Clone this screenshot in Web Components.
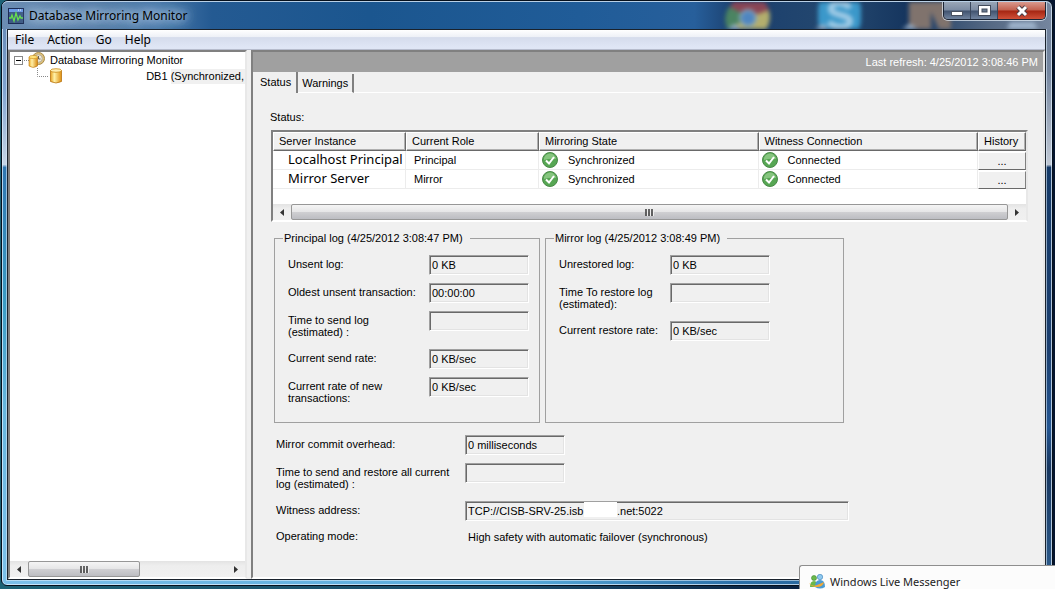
<!DOCTYPE html>
<html lang="en">
<head>
<meta charset="utf-8">
<title>Database Mirroring Monitor</title>
<style>
    * { box-sizing: border-box; }
    body {
        margin: 0;
        min-height: 100vh;
        display: flex;
        flex-direction: column;
        padding: 0 2px 3px 1px;
        background: linear-gradient(90deg, #1d6276, #1b4a68 50%, #061a3a 80%, #04142e);
        font: 11px/12px "Liberation Sans", Arial, sans-serif;
        color: #000;
        overflow: hidden;
    }
    monitor-window { flex: 1; }
    .workspace {
        flex: 1;
        display: grid;
        grid-template-columns: 239px 1fr;
        gap: 4px;
        background: #f0f0f0;
    }
    .panel {
        display: flex;
        flex-direction: column;
        min-width: 0;
        border: 2px solid;
        border-color: #808080 #e8e8e8 #fff #808080;
    }
    .content {
        display: flex;
        flex-direction: column;
        padding: 18px 15px 12px 17px;
    }
    .caption { margin-bottom: 7px; }
    status-grid { margin-left: 1px; }
    .groups {
        display: flex;
        gap: 5px;
        margin: 10px 0 12px 4px;
    }
    .summary {
        display: flex;
        flex-direction: column;
        gap: 8px;
        margin-left: 6px;
        --label-width: 189px;
    }
</style>
</head>
<body>
    <monitor-window heading="Database Mirroring Monitor">
        <menu-bar items="File,Action,Go,Help"></menu-bar>
        <div class="workspace">
            <server-tree></server-tree>
            <div class="panel">
                <refresh-bar>Last refresh: 4/25/2012 3:08:46 PM</refresh-bar>
                <tab-strip tabs="Status,Warnings"></tab-strip>
                <div class="content">
                    <div class="caption">Status:</div>
                    <status-grid></status-grid>
                    <div class="groups">
                        <log-group heading="Principal log (4/25/2012 3:08:47 PM)" style="--group-width: 266px; --label-width: 141px">
                            <value-field label="Unsent log:" value="0 KB"></value-field>
                            <value-field label="Oldest unsent transaction:" value="00:00:00"></value-field>
                            <value-field label="Time to send log&#10;(estimated) :"></value-field>
                            <value-field label="Current send rate:" value="0 KB/sec"></value-field>
                            <value-field label="Current rate of new&#10;transactions:" value="0 KB/sec"></value-field>
                        </log-group>
                        <log-group heading="Mirror log (4/25/2012 3:08:49 PM)" style="--group-width: 299px; --label-width: 111px">
                            <value-field label="Unrestored log:" value="0 KB"></value-field>
                            <value-field label="Time To restore log&#10;(estimated):"></value-field>
                            <value-field label="Current restore rate:" value="0 KB/sec"></value-field>
                        </log-group>
                    </div>
                    <div class="summary">
                        <value-field label="Mirror commit overhead:" value="0 milliseconds"></value-field>
                        <value-field label="Time to send and restore all current&#10;log (estimated) :"></value-field>
                        <value-field wide masked label="Witness address:" value="TCP://CISB-SRV-25.isb           .net:5022"></value-field>
                        <value-field plain label="Operating mode:" value="High safety with automatic failover (synchronous)"></value-field>
                    </div>
                </div>
            </div>
        </div>
    </monitor-window>
    <toast-popup>Windows Live Messenger</toast-popup>

<script>
const monitor_window_template = document.createElement('template');
monitor_window_template.innerHTML = `
    <style>
        * { box-sizing: border-box; }
        :host {
            display: flex;
            flex-direction: column;
            padding: 0 6px 5px 5px;
            border: 1px solid #06101c;
            border-radius: 7px 7px 6px 6px;
            box-shadow: inset 0 0 0 1px rgba(225, 240, 255, .75);
            background:
                linear-gradient(#5f84b0, #7fa3cf 15%, #c5d5e6 28%, #2f76b0 28.5%, #3a9cc4 52%, #66b6de 70%, #7cc0ea) left / 7px 100% no-repeat,
                linear-gradient(#6d7f99, #75869f 12%, #c0c8d4 28%, #153a68 28.5%, #1c4070 60%, #245692 73%, #17365f 80%, #2f5f90) right / 8px 100% no-repeat,
                linear-gradient(90deg, #7cc0ea, #55a8d8 50%, #2c70a8 70%, #1c4a7c) bottom / 100% 7px no-repeat,
                #24588f;
        }
        .title {
            position: relative;
            display: flex;
            justify-content: space-between;
            height: 28px;
            margin: 0 -5px;
            padding: 0 5px 0 6px;
            border-radius: 6px 6px 0 0;
            border-top: 1px solid #b9d0e6;
            overflow: hidden;
            background: linear-gradient(90deg, #6b8db3, #547ca8 10%, #4a78aa 15%, #245a92 20%, #1b568f 35%, #205c98 55%, #275f9b 66%, #1b3f6d 70%, #24486f 80%, #16365f 86%, #546883 94%, #75869f);
        }
        .backdrop {
            position: absolute;
            right: 0;
            top: 0;
            width: 352px;
            height: 27px;
            filter: blur(2px);
        }
        .name {
            position: relative;
            display: flex;
            align-items: center;
            gap: 5px;
        }
        h1 {
            margin: 0;
            font: 12px/16px "Noto Sans", "Open Sans", sans-serif;
            text-shadow: 0 0 8px #c8dcf0, 0 0 12px #b5cde6, 0 0 14px #b5cde6;
        }
        .controls {
            position: relative;
            display: flex;
            height: 18px;
            border: 1px solid #1b2535;
            border-top: 0;
            border-radius: 0 0 5px 5px;
            box-shadow: 0 0 0 1px rgba(230, 240, 250, .7);
            overflow: hidden;
        }
        button {
            display: flex;
            align-items: center;
            justify-content: center;
            width: 27px;
            padding: 0;
            border: 0;
            border-right: 1px solid #39475c;
            background: linear-gradient(#99a6b7, #7b8ba2 48%, #40526e 52%, #71849f);
        }
        .close {
            width: 47px;
            border-right: 0;
            background: linear-gradient(#d99a8e, #c2604e 48%, #a52512 52%, #d05038);
        }
        .client {
            flex: 1;
            display: flex;
            flex-direction: column;
            border: 1px solid #1a222c;
            box-shadow: 0 0 0 1px rgba(220, 236, 250, .6);
        }
    </style>
    <div class="title">
        <svg class="backdrop" viewBox="0 0 352 27" aria-hidden="true">
            <circle cx="50" cy="15" r="21" fill="#b3ae6d"/>
            <path d="M50 15L29 28A21 21 0 0 1 31 4z" fill="#4b8462"/>
            <path d="M50 15L31 5A21 21 0 0 1 70 8z" fill="#8a4555"/>
            <circle cx="49" cy="16" r="8" fill="#4f86c0" stroke="#8faab8" stroke-width="2"/>
            <rect x="119" y="-8" width="43" height="42" rx="15" fill="#3b98ca"/>
            <path d="M151 6C145-1 132 0 132 7S151 12 151 19 136 27 130 20" fill="none" stroke="#a0cbe6" stroke-width="6"/>
            <path d="M210 0h42v27h-12l-8-17v17h-22z" fill="#80736d"/>
            <path d="M203 27l8-5 8 5zM28 27l8-5 6 5zM116 27l8-5 6 5zM308 27l3-7h24l4 7z" fill="#9fb4cc"/>
        </svg>
        <div class="name">
            <svg width="16" height="16" viewBox="0 0 16 16" aria-hidden="true">
                <rect x=".5" y=".5" width="15" height="15" fill="#3d5a85" stroke="#1c2c55"/>
                <rect x="1" y="1" width="14" height="3" fill="#6d9be6"/>
                <path d="M10 2h1M12 2h1" stroke="#fff"/>
                <path d="M1 10h2l1-3 2 6 2-8 2 7 2-4 1 2h2" fill="none" stroke="#66e04e" stroke-width="1.3"/>
            </svg>
            <h1></h1>
        </div>
        <div class="controls">
            <button aria-label="Minimize"><svg width="12" height="12"><rect x=".5" y="6.500" width="11" height="4" fill="#fff" stroke="#4a5261"/></svg></button>
            <button aria-label="Maximize"><svg width="13" height="12"><rect x="2.500" y="2.500" width="8" height="6" fill="none" stroke="#434c5c" stroke-width="5"/><rect x="2.500" y="2.500" width="8" height="6" fill="#67788f" stroke="#fff" stroke-width="3"/><rect x="4" y="4" width="5" height="3" fill="none" stroke="#434c5c"/></svg></button>
            <button class="close" aria-label="Close"><svg width="14" height="12"><path d="M3 2l8 8M11 2l-8 8" stroke="#4b3e46" stroke-width="5"/><path d="M3 2l8 8M11 2l-8 8" stroke="#fff" stroke-width="3"/></svg></button>
        </div>
    </div>
    <div class="client"><slot></slot></div>
`

class MonitorWindow extends HTMLElement {
    constructor() {
        super();
        this.attachShadow({mode: 'open'});
        this.shadowRoot.appendChild(monitor_window_template.content.cloneNode(true));
    }
    connectedCallback() {
        this.shadowRoot.querySelector('h1').textContent = this.getAttribute('heading');
    }
}
window.customElements.define('monitor-window', MonitorWindow)

class MenuBar extends HTMLElement {
    constructor() {
        super();
        this.attachShadow({mode: 'open'});
    }
    connectedCallback() {
        let items = this.getAttribute('items').split(',');
        this.shadowRoot.innerHTML = `
            <style>
                :host {
                    display: flex;
                    gap: 13px;
                    height: 20px;
                    padding: 0 7px;
                    background: linear-gradient(#fff, #eef1f7 35%, #d5dcec 40%, #dfe6f5 90%);
                    border-bottom: 1px solid #b6bccc;
                    box-sizing: border-box;
                }
                button {
                    padding: 0;
                    border: 0;
                    background: none;
                    font: 12px/18px "Noto Sans", "Open Sans", sans-serif;
                }
            </style>
            ${items.map((item) => `<button>${item}</button>`).join('')}`;
    }
}
window.customElements.define('menu-bar', MenuBar)

const scroll_track_template = document.createElement('template');
scroll_track_template.innerHTML = `
    <style>
        :host {
            display: flex;
            height: 16px;
            background: linear-gradient(#e3e3e3, #eee 30%, #f0f0f0);
        }
        button {
            display: flex;
            align-items: center;
            justify-content: center;
            width: 18px;
            padding: 0;
            border: 0;
            background: none;
        }
        .track { flex: 1; display: flex; }
        .thumb {
            box-sizing: border-box;
            width: var(--thumb-width, 100%);
            border: 1px solid #979797;
            border-radius: 2px;
            display: flex;
            align-items: center;
            justify-content: center;
            background: linear-gradient(#f5f5f5, #e6e6e7 48%, #cfcfd2 52%, #bcbdc2);
        }
    </style>
    <button aria-label="Scroll left"><svg width="4" height="7"><path d="M4 0v7L0 3.500z" fill="#333"/></svg></button>
    <div class="track"><div class="thumb"><svg width="9" height="7"><path d="M1 0v7M4 0v7M7 0v7" stroke="#444" stroke-width="1.600"/><path d="M2.500 0v7M5.500 0v7M8.500 0v7" stroke="#eee"/></svg></div></div>
    <button aria-label="Scroll right"><svg width="4" height="7"><path d="M0 0v7l4-3.500z" fill="#333"/></svg></button>
`

class ScrollTrack extends HTMLElement {
    constructor() {
        super();
        this.attachShadow({mode: 'open'});
        this.shadowRoot.appendChild(scroll_track_template.content.cloneNode(true));
    }
}
window.customElements.define('scroll-track', ScrollTrack)

const server_tree_template = document.createElement('template');
server_tree_template.innerHTML = `
    <style>
        :host {
            display: flex;
            flex-direction: column;
            min-width: 0;
            box-sizing: border-box;
            border: 2px solid;
            border-color: #808080 #e8e8e8 #fff #808080;
            background: #fff;
        }
        ul {
            flex: 1;
            margin: 0;
            padding: 0;
            list-style: none;
            overflow: hidden;
        }
        li {
            display: flex;
            align-items: center;
            height: 16px;
            white-space: nowrap;
        }
        .root { padding-left: 4px; gap: 5px; }
        .child { padding-left: 27px; }
        .child .name {
            flex: 1;
            padding-right: 1px;
            text-align: right;
            line-height: 15px;
            background: linear-gradient(90deg, #fff 108px, #f0f0f0 108px);
        }
        svg { flex: none; }
    </style>
    <ul role="tree">
        <li class="root" role="treeitem">
            <svg width="31" height="16" viewBox="0 0 31 16">
                <defs><linearGradient id="gold"><stop offset="0" stop-color="#f0b030"/><stop offset=".35" stop-color="#fff0a8"/><stop offset="1" stop-color="#d98a10"/></linearGradient></defs>
                <rect x=".5" y="4.500" width="8" height="8" fill="#fff" stroke="#888"/>
                <path d="M2 8.500h5" stroke="#000"/>
                <path d="M10 8.500h5" stroke="#888" stroke-dasharray="1 1"/>
                <circle cx="24.500" cy="6.500" r="6" fill="#dcc07c" stroke="#a88a48"/>
                <circle cx="24.500" cy="6.500" r="3.800" fill="#eee8d8" stroke="#b9b09a"/>
                <path d="M24.500 7V4M24.500 7h2" stroke="#6b6250"/>
                <path d="M15 5v9q4 3 8.500 0V5z" fill="url(#gold)" stroke="#b87310" stroke-width=".6"/>
                <ellipse cx="19.250" cy="5" rx="4.250" ry="1.600" fill="#ffe27a" stroke="#c98a18" stroke-width=".6"/>
            </svg>
            <span>Database Mirroring Monitor</span>
        </li>
        <li class="child" role="treeitem">
            <svg width="26" height="16" viewBox="0 0 26 16">
                <path d="M.5 0v8.500H12" fill="none" stroke="#888" stroke-dasharray="1 1"/>
                <path d="M13.500 2.500v11q5.500 3 11 0v-11z" fill="url(#gold2)" stroke="#b87310" stroke-width=".8"/>
                <defs><linearGradient id="gold2"><stop offset="0" stop-color="#e8a020"/><stop offset=".35" stop-color="#fff2a8"/><stop offset="1" stop-color="#e09010"/></linearGradient></defs>
                <ellipse cx="19" cy="2.500" rx="5.500" ry="1.800" fill="#ffeeb0" stroke="#c98a18" stroke-width=".8"/>
            </svg>
            <span class="name">DB1 (Synchronized,</span>
        </li>
    </ul>
    <scroll-track style="--thumb-width: 112px"></scroll-track>
`

class ServerTree extends HTMLElement {
    constructor() {
        super();
        this.attachShadow({mode: 'open'});
        this.shadowRoot.appendChild(server_tree_template.content.cloneNode(true));
    }
}
window.customElements.define('server-tree', ServerTree)

class RefreshBar extends HTMLElement {
    constructor() {
        super();
        this.attachShadow({mode: 'open'});
        this.shadowRoot.innerHTML = `
            <style>
                :host {
                    display: block;
                    padding-right: 5px;
                    text-align: right;
                    line-height: 20px;
                    color: #fff;
                    background: #a0a0a0;
                }
            </style>
            <slot></slot>`;
    }
}
window.customElements.define('refresh-bar', RefreshBar)

class TabStrip extends HTMLElement {
    constructor() {
        super();
        this.attachShadow({mode: 'open'});
    }
    connectedCallback() {
        let tabs = this.getAttribute('tabs').split(',');
        this.shadowRoot.innerHTML = `
            <style>
                :host {
                    display: flex;
                    align-items: flex-end;
                    height: 21px;
                }
                button {
                    box-sizing: border-box;
                    height: 19px;
                    padding: 0 4px;
                    border: 0;
                    border-right: 2px solid #808080;
                    border-bottom: 1px solid #fff;
                    background: none;
                    font: inherit;
                }
                button[aria-selected="true"] {
                    height: 21px;
                    padding: 0 5px 2px 7px;
                    border-bottom: 0;
                }
                .rule { flex: 1; border-bottom: 1px solid #fff; }
            </style>
            ${tabs.map((tab, i) => `<button role="tab" aria-selected="${i === 0}">${tab}</button>`).join('')}
            <div class="rule"></div>`;
    }
}
window.customElements.define('tab-strip', TabStrip)

class StatusGrid extends HTMLElement {
    constructor() {
        super();
        this.attachShadow({mode: 'open'});
        this.servers = [
            {name: 'Localhost Principal', role: 'Principal', state: 'Synchronized', witness: 'Connected'},
            {name: 'Mirror Server', role: 'Mirror', state: 'Synchronized', witness: 'Connected'}
        ];
    }
    renderCheck(text) {
        return `
            <div class="check">
                <svg width="16" height="16" viewBox="0 0 16 16">
                    <circle cx="8" cy="8" r="7.500" fill="#56a653" stroke="#4a8a48"/>
                    <path d="M2 8a6 6 0 0 1 12-1Q8 6 2 8z" fill="#86c57f"/>
                    <path d="M4 8.500l3 3 5-6.500" fill="none" stroke="#fff" stroke-width="2"/>
                </svg>
                <span>${text}</span>
            </div>`;
    }
    connectedCallback() {
        let rows = this.servers.map(({name, role, state, witness}) => `
            <tr>
                <td class="server">${name}</td>
                <td class="role">${role}</td>
                <td>${this.renderCheck(state)}</td>
                <td>${this.renderCheck(witness)}</td>
                <td class="history"><button aria-label="History of ${name}">...</button></td>
            </tr>`).join('');
        this.shadowRoot.innerHTML = `
            <style>
                * { box-sizing: border-box; }
                :host {
                    display: block;
                    border: 2px solid;
                    border-color: #808080 #e8e8e8 #fff #808080;
                    background: #fff;
                }
                table {
                    width: 100%;
                    table-layout: fixed;
                    border-collapse: separate;
                    border-spacing: 0;
                    margin-bottom: 15px;
                }
                .narrow { width: 133px; }
                .last { width: 48px; }
                th {
                    height: 19px;
                    padding: 0 0 2px 5px;
                    text-align: left;
                    font-weight: normal;
                    background: #f0f0f0;
                    border: 1px solid;
                    border-color: #fff #696969 #696969 #fff;
                    box-shadow: inset -1px -1px #b0b0b0;
                }
                td {
                    height: 19px;
                    padding: 0;
                    border-right: 1px solid #ececec;
                    border-bottom: 1px solid #ececec;
                    white-space: nowrap;
                }
                .server {
                    padding: 0 0 2px 15px;
                    font: 13px/15px "Noto Sans", "Open Sans", sans-serif;
                }
                .role { padding-left: 8px; }
                .check {
                    display: flex;
                    align-items: center;
                    gap: 10px;
                    padding-left: 3px;
                }
                .history { border: 0; }
                button {
                    display: block;
                    width: 100%;
                    height: 18px;
                    padding: 0;
                    border: 1px solid;
                    border-color: #fff #808080 #696969 #fff;
                    background: #f0f0f0;
                    font: inherit;
                }
            </style>
            <table>
                <thead>
                    <tr>
                        <th class="narrow">Server Instance</th>
                        <th class="narrow">Current Role</th>
                        <th>Mirroring State</th>
                        <th>Witness Connection</th>
                        <th class="last">History</th>
                    </tr>
                </thead>
                <tbody>${rows}</tbody>
            </table>
            <scroll-track></scroll-track>`;
    }
}
window.customElements.define('status-grid', StatusGrid)

class LogGroup extends HTMLElement {
    constructor() {
        super();
        this.attachShadow({mode: 'open'});
    }
    connectedCallback() {
        this.shadowRoot.innerHTML = `
            <style>
                :host { display: flex; width: var(--group-width); }
                fieldset {
                    flex: 1;
                    min-width: 0;
                    margin: 0;
                    padding: 11px 0 15px 13px;
                    border: 1px solid #a0a0a0;
                }
                legend {
                    margin-left: -5px;
                    padding: 0 7px 0 1px;
                    background: #f0f0f0;
                }
                .fields {
                    display: flex;
                    flex-direction: column;
                    gap: 8px;
                }
            </style>
            <fieldset>
                <legend>${this.getAttribute('heading')}</legend>
                <div class="fields"><slot></slot></div>
            </fieldset>`;
    }
}
window.customElements.define('log-group', LogGroup)

const value_field_template = document.createElement('template');
value_field_template.innerHTML = `
    <style>
        * { box-sizing: border-box; }
        :host { display: flex; align-items: flex-start; }
        label {
            flex: none;
            width: var(--label-width);
            padding: 3px 0;
            white-space: pre;
        }
        .box { position: relative; width: 100px; }
        :host([wide]) .box { width: 384px; }
        :host([plain]) .box { width: 384px; }
        input {
            display: block;
            width: 100%;
            height: 20px;
            padding: 0 2px;
            border: 1px solid;
            border-color: #a0a0a0 #fff #fff #a0a0a0;
            box-shadow: inset 1px 1px #696969, inset -1px -1px #e3e3e3;
            background: #f0f0f0;
            font: inherit;
            color: inherit;
            outline: 0;
        }
        :host([plain]) input {
            border-color: transparent;
            box-shadow: none;
            background: none;
        }
        :host([plain]) { margin-top: -2px; }
        .mask { display: none; }
        :host([masked]) .mask {
            display: block;
            position: absolute;
            left: 119px;
            top: 1px;
            width: 33px;
            height: 15px;
            background: #fff;
        }
    </style>
    <label for="value"></label>
    <div class="box"><input id="value" readonly><div class="mask"></div></div>
`

class ValueField extends HTMLElement {
    constructor() {
        super();
        this.attachShadow({mode: 'open'});
        this.shadowRoot.appendChild(value_field_template.content.cloneNode(true));
    }
    connectedCallback() {
        this.shadowRoot.querySelector('label').textContent = this.getAttribute('label');
        this.shadowRoot.getElementById('value').value = this.getAttribute('value') || '';
    }
}
window.customElements.define('value-field', ValueField)

// sits over the window in the corner of the desktop
class ToastPopup extends HTMLElement {
    constructor() {
        super();
        this.attachShadow({mode: 'open'});
        this.shadowRoot.innerHTML = `
            <style>
                :host {
                    position: absolute;
                    right: 0;
                    bottom: 0;
                    box-sizing: border-box;
                    width: 256px;
                    height: 24px;
                    display: flex;
                    gap: 5px;
                    padding: 8px 0 0 9px;
                    border: 1px solid #8e8e8e;
                    border-width: 1px 0 0 1px;
                    border-radius: 3px 0 0 0;
                    background: #fcfcfc;
                    color: #222;
                    font: 11px/16px "Noto Sans", "Open Sans", sans-serif;
                }
            </style>
            <svg width="16" height="15" viewBox="0 0 16 15" aria-hidden="true">
                <circle cx="5" cy="4" r="2.500" fill="#6bb84a" stroke="#3d8a32" stroke-width=".6"/>
                <path d="M1 13q0-6 4-6t4 6z" fill="#6bb84a"/>
                <circle cx="11" cy="3" r="2.700" fill="#8ec8ee" stroke="#3c82b8" stroke-width=".6"/>
                <path d="M6 13q0-7 5-7t5 7q-5 3-10 0z" fill="#4a9bd4"/>
                <path d="M0 9q3 4 8 2t7-3q-1 5-7 5T0 9z" fill="#f3a935"/>
            </svg>
            <slot></slot>`;
    }
}
window.customElements.define('toast-popup', ToastPopup)
</script>
</body>
</html>
